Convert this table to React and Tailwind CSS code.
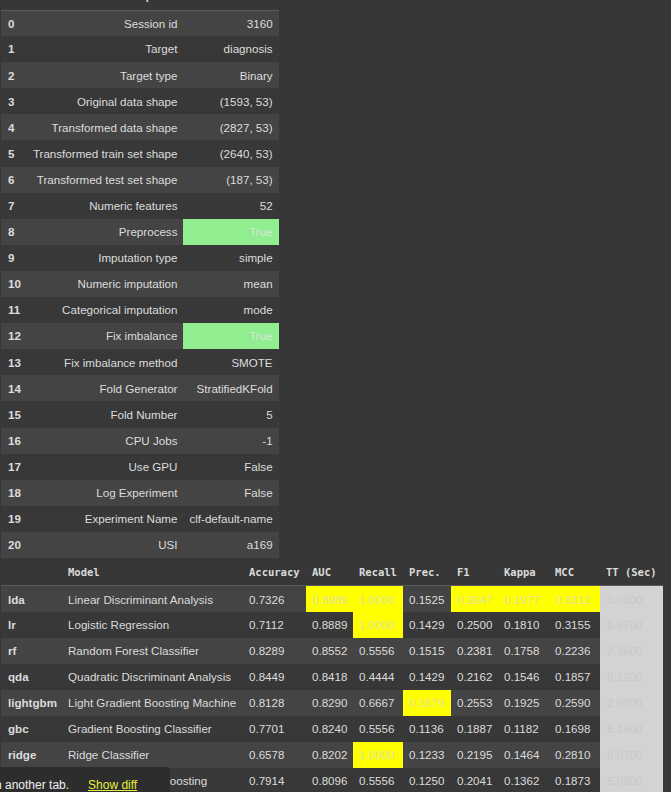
import React from "react";

const rows1 = [
  ["0", "Session id", "3160"],
  ["1", "Target", "diagnosis"],
  ["2", "Target type", "Binary"],
  ["3", "Original data shape", "(1593, 53)"],
  ["4", "Transformed data shape", "(2827, 53)"],
  ["5", "Transformed train set shape", "(2640, 53)"],
  ["6", "Transformed test set shape", "(187, 53)"],
  ["7", "Numeric features", "52"],
  ["8", "Preprocess", "True", true],
  ["9", "Imputation type", "simple"],
  ["10", "Numeric imputation", "mean"],
  ["11", "Categorical imputation", "mode"],
  ["12", "Fix imbalance", "True", true],
  ["13", "Fix imbalance method", "SMOTE"],
  ["14", "Fold Generator", "StratifiedKFold"],
  ["15", "Fold Number", "5"],
  ["16", "CPU Jobs", "-1"],
  ["17", "Use GPU", "False"],
  ["18", "Log Experiment", "False"],
  ["19", "Experiment Name", "clf-default-name"],
  ["20", "USI", "a169"],
];

const headers2 = [
  ["", "w-[61px]"],
  ["Model", "w-[181px]"],
  ["Accuracy", "w-[63px]"],
  ["AUC", "w-[47px]"],
  ["Recall", "w-[50px]"],
  ["Prec.", "w-[48px]"],
  ["F1", "w-[47px]"],
  ["Kappa", "w-[51px]"],
  ["MCC", "w-[51px]"],
  ["TT (Sec)", "w-[63px]"],
];

const rows2 = [
  ["lda", "Linear Discriminant Analysis", "0.7326", [["0.8989", 1], ["1.0000", 1], ["0.1525", 0], ["0.2647", 1], ["0.1977", 1], ["0.3312", 1]], "0.0300"],
  ["lr", "Logistic Regression", "0.7112", [["0.8889", 0], ["1.0000", 1], ["0.1429", 0], ["0.2500", 0], ["0.1810", 0], ["0.3155", 0]], "0.6700"],
  ["rf", "Random Forest Classifier", "0.8289", [["0.8552", 0], ["0.5556", 0], ["0.1515", 0], ["0.2381", 0], ["0.1758", 0], ["0.2236", 0]], "2.3600"],
  ["qda", "Quadratic Discriminant Analysis", "0.8449", [["0.8418", 0], ["0.4444", 0], ["0.1429", 0], ["0.2162", 0], ["0.1546", 0], ["0.1857", 0]], "0.1200"],
  ["lightgbm", "Light Gradient Boosting Machine", "0.8128", [["0.8290", 0], ["0.6667", 0], ["0.1579", 1], ["0.2553", 0], ["0.1925", 0], ["0.2590", 0]], "2.0300"],
  ["gbc", "Gradient Boosting Classifier", "0.7701", [["0.8240", 0], ["0.5556", 0], ["0.1136", 0], ["0.1887", 0], ["0.1182", 0], ["0.1698", 0]], "5.1600"],
  ["ridge", "Ridge Classifier", "0.6578", [["0.8202", 0], ["1.0000", 1], ["0.1233", 0], ["0.2195", 0], ["0.1464", 0], ["0.2810", 0]], "0.0700"],
  ["xgboost", "Extreme Gradient Boosting", "0.7914", [["0.8096", 0], ["0.5556", 0], ["0.1250", 0], ["0.2041", 0], ["0.1362", 0], ["0.1873", 0]], "5.0300"],
];

const mono = { fontFamily: '"DejaVu Sans Mono", "Liberation Mono", monospace' };

export default function App() {
  return (
    <div
      className="relative h-[792px] overflow-hidden bg-[#373737] text-[11.6px] text-[#dcdcdc]"
      style={{ fontFamily: '"Liberation Sans", Arial, sans-serif' }}
    >
      <div className="-mt-[16px] ml-px">
        <table>
          <thead>
            <tr className="h-[26px] border-b border-[#595959]">
              <th className="pl-[7px] pr-[6px]"></th>
              <th className="px-[6px] text-right text-[10.5px] font-bold" style={mono}>Description</th>
              <th className="px-[6px] text-right text-[10.5px] font-bold" style={mono}>Value</th>
            </tr>
          </thead>
          <tbody>
            {rows1.map((r, i) => (
              <tr key={r[0]} className={`h-[26.1px] ${i % 2 === 0 ? "bg-[#444444]" : "bg-[#383838]"}`}>
                <td className="pl-[7px] pr-[6px] font-bold">{r[0]}</td>
                <td className="px-[6px] text-right whitespace-nowrap">{r[1]}</td>
                <td className={`px-[6px] text-right whitespace-nowrap ${r[3] ? "bg-[#90ee90] text-[#d8e8d8]" : ""}`}>{r[2]}</td>
              </tr>
            ))}
          </tbody>
        </table>

        <table className="mt-[2px] w-[662px] table-fixed">
          <thead>
            <tr className="h-[26px] border-b border-[#595959]">
              {headers2.map(([h, w], i) => (
                <th key={i} className={`${w} px-[6px] text-left text-[10.5px] font-bold whitespace-nowrap`} style={mono}>
                  {h}
                </th>
              ))}
            </tr>
          </thead>
          <tbody>
            {rows2.map((r, i) => (
              <tr key={r[0]} className={`h-[26px] ${i % 2 === 0 ? "bg-[#444444]" : "bg-[#383838]"}`}>
                <td className="pl-[7px] pr-[4px] font-bold whitespace-nowrap">{r[0]}</td>
                <td className="px-[6px] whitespace-nowrap">{r[1]}</td>
                <td className="px-[6px]">{r[2]}</td>
                {r[3].map(([v, hl], j) => (
                  <td key={j} className={`px-[6px] ${hl ? "bg-[#ffff00] text-[#e2e2a0]" : ""}`}>{v}</td>
                ))}
                <td className="px-[7px] bg-[#d3d3d3] text-[#c8c8c8]">{r[4]}</td>
              </tr>
            ))}
          </tbody>
        </table>
      </div>

      <div className="absolute left-0 top-[767px] flex h-[40px] w-[170px] items-start gap-[19px] rounded-tr-[3px] bg-[#2d2d2d] pt-[9px] text-[12px]">
        <span className="-ml-[5px] whitespace-nowrap text-[#f0f0f0]">n another tab.</span>
        <span className="whitespace-nowrap text-[#e4ef3e] underline decoration-1 underline-offset-1">Show diff</span>
      </div>
    </div>
  );
}
